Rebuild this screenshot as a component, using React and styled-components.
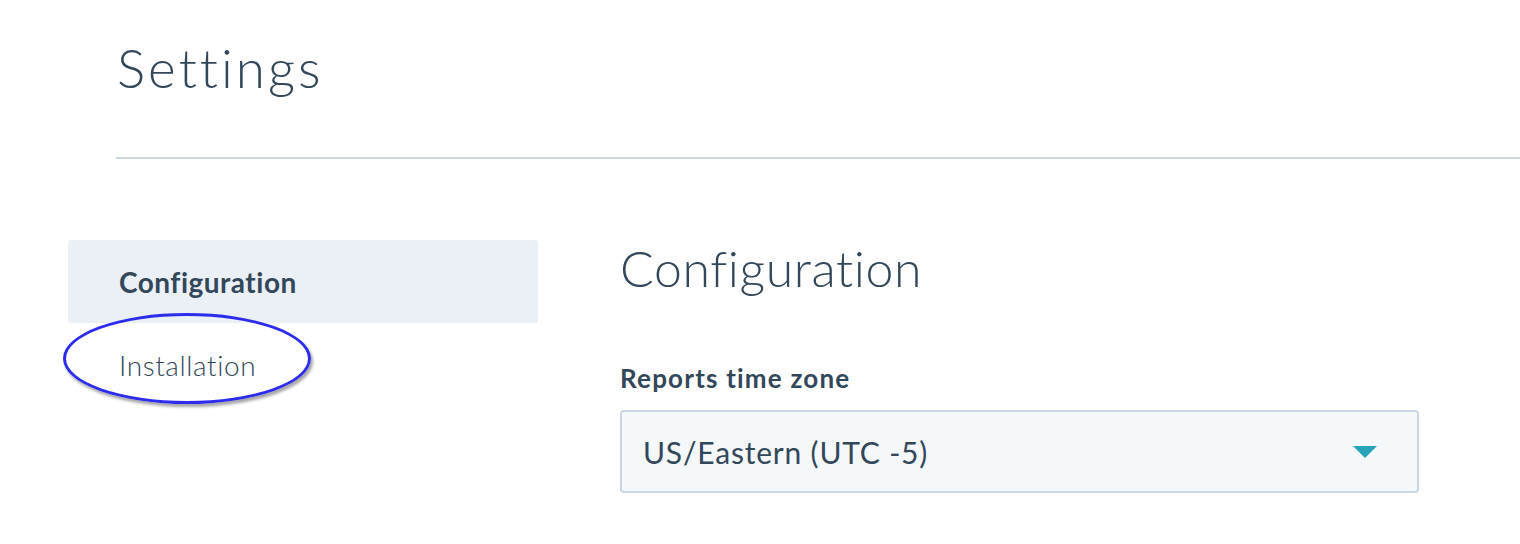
import React from "react";
import styled, { createGlobalStyle } from "styled-components";

const GlobalStyle = createGlobalStyle`
  html, body {
    margin: 0;
    padding: 0;
    background: #ffffff;
  }
  body {
    font-family: Lato, "Noto Sans", sans-serif;
    color: #33475b;
  }
`;

const Page = styled.div`
  width: 1520px;
  height: 544px;
  overflow: hidden;
`;

const Header = styled.header`
  margin-left: 116px;
  padding-top: 33px;
  border-bottom: 2px solid #cbd6e2;
  height: 159px;
  box-sizing: border-box;
`;

const Title = styled.h1`
  margin: 0;
  padding-left: 1px;
  font-size: 53px;
  font-weight: 300;
  line-height: 70px;
  letter-spacing: 3px;
`;

const Body = styled.div`
  display: flex;
  gap: 82px;
  padding-left: 68px;
  padding-top: 81px;
`;

const Sidebar = styled.nav`
  width: 470px;
  display: flex;
  flex-direction: column;
  position: relative;
`;

const NavItem = styled.div`
  height: ${(p) => (p.$active ? "83px" : "84px")};
  display: flex;
  align-items: center;
  padding-left: 51px;
  border-radius: 3px;
  background: ${(p) => (p.$active ? "#eaf0f6" : "transparent")};
  font-size: 28px;
  font-weight: ${(p) => (p.$active ? 700 : 300)};
  letter-spacing: ${(p) => (p.$active ? "0.5px" : "0.6px")};
`;

const Highlight = styled.div`
  position: absolute;
  left: -5px;
  top: 73px;
  width: 242px;
  height: 85px;
  border: 3px solid #2d2cec;
  border-radius: 50%;
  box-shadow: 2px 3px 3px rgba(0, 0, 0, 0.35);
  pointer-events: none;
`;

const Content = styled.main`
  display: flex;
  flex-direction: column;
  width: 799px;
`;

const Heading = styled.h2`
  margin: 0;
  font-size: 50px;
  font-weight: 300;
  line-height: 56px;
  letter-spacing: 0.6px;
`;

const Label = styled.label`
  margin-top: 66px;
  font-size: 26px;
  font-weight: 700;
  line-height: 32px;
  letter-spacing: 1.2px;
`;

const Select = styled.div`
  margin-top: 16px;
  height: 83px;
  box-sizing: border-box;
  display: flex;
  align-items: center;
  justify-content: space-between;
  padding: 0 40px 0 21px;
  background: #f5f8fa;
  border: 2px solid #cbd6e2;
  border-radius: 4px;
  font-size: 30px;
  font-weight: 400;
  letter-spacing: 0.8px;
`;

const Caret = styled.span`
  width: 0;
  height: 0;
  border-left: 12px solid transparent;
  border-right: 12px solid transparent;
  border-top: 12px solid #27a4b8;
`;

export default function App() {
  return (
    <Page>
      <GlobalStyle />
      <Header>
        <Title>Settings</Title>
      </Header>
      <Body>
        <Sidebar>
          <NavItem $active>Configuration</NavItem>
          <NavItem>Installation</NavItem>
          <Highlight />
        </Sidebar>
        <Content>
          <Heading>Configuration</Heading>
          <Label>Reports time zone</Label>
          <Select>
            <span>US/Eastern (UTC -5)</span>
            <Caret />
          </Select>
        </Content>
      </Body>
    </Page>
  );
}
